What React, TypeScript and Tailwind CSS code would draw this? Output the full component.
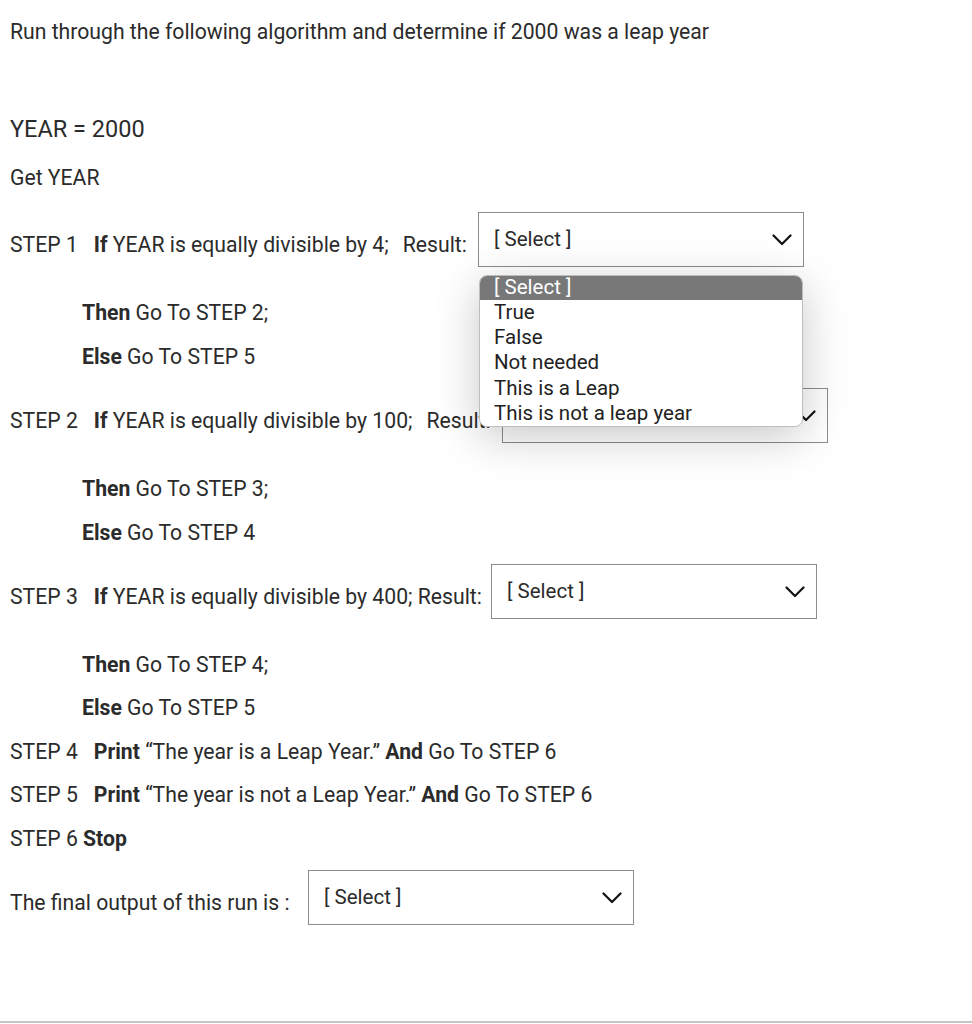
import React from "react";

function Chevron() {
  return (
    <svg width="20" height="12" viewBox="0 0 20 12" className="shrink-0">
      <polyline points="1.5,1.5 10,10 18.5,1.5" fill="none" stroke="#111" strokeWidth="2.2" strokeLinecap="round" strokeLinejoin="round" />
    </svg>
  );
}

function SelectBox() {
  return (
    <div className="w-[326px] h-[55px] border border-[#8c8c8c] bg-white flex items-center justify-between pl-[15px] pr-[11px] shrink-0">
      <span className="text-[20.5px] text-[#2b2b2b] -mt-[1px]">[ Select ]</span>
      <Chevron />
    </div>
  );
}

function StepRow({ labelW, mt, children }: { labelW: number; mt: string; children: React.ReactNode }) {
  return (
    <div className={`flex items-center h-[55px] ${mt}`}>
      <div className="shrink-0 whitespace-nowrap pt-[11px]" style={{ width: labelW }}>
        {children}
      </div>
      <SelectBox />
    </div>
  );
}

export default function App() {
  const options = ["True", "False", "Not needed", "This is a Leap", "This is not a leap year"];
  return (
    <div
      className="relative w-[972px] h-[1024px] bg-white text-[#2b2b2b] text-[21.2px] overflow-hidden"
      style={{ fontFamily: "Roboto, 'Liberation Sans', sans-serif" }}
    >
      <div className="px-[10px]">
        <div className="h-[24px] mt-[20px] flex items-center whitespace-nowrap">
          Run through the following algorithm and determine if 2000 was a leap year
        </div>
        <div className="h-[26px] mt-[73px] flex items-center text-[23.5px]">YEAR = 2000</div>
        <div className="h-[24px] mt-[23px] flex items-center">Get YEAR</div>

        <StepRow labelW={468} mt="mt-[22px]">
          STEP 1<span className="ml-[16px] font-bold">If</span> YEAR is equally divisible by 4;<span className="ml-[14px]">Result:</span>
        </StepRow>
        <div className="h-[24px] mt-[34px] flex items-center pl-[72px]">
          <b className="font-bold">Then</b>&nbsp;Go To STEP 2;
        </div>
        <div className="h-[24px] mt-[20px] flex items-center pl-[72px]">
          <b className="font-bold">Else</b>&nbsp;Go To STEP 5
        </div>

        <StepRow labelW={492} mt="mt-[19px]">
          STEP 2<span className="ml-[16px] font-bold">If</span> YEAR is equally divisible by 100;<span className="ml-[14px]">Result:</span>
        </StepRow>
        <div className="h-[24px] mt-[34px] flex items-center pl-[72px]">
          <b className="font-bold">Then</b>&nbsp;Go To STEP 3;
        </div>
        <div className="h-[24px] mt-[20px] flex items-center pl-[72px]">
          <b className="font-bold">Else</b>&nbsp;Go To STEP 4
        </div>

        <StepRow labelW={481} mt="mt-[19px]">
          STEP 3<span className="ml-[16px] font-bold">If</span> YEAR is equally divisible by 400; Result:
        </StepRow>
        <div className="h-[24px] mt-[34px] flex items-center pl-[72px]">
          <b className="font-bold">Then</b>&nbsp;Go To STEP 4;
        </div>
        <div className="h-[24px] mt-[19px] flex items-center pl-[72px]">
          <b className="font-bold">Else</b>&nbsp;Go To STEP 5
        </div>

        <div className="h-[24px] mt-[20px] flex items-center whitespace-nowrap">
          STEP 4<span className="ml-[16px] font-bold">Print</span>&nbsp;“The year is a Leap Year.”&nbsp;<b className="font-bold">And</b>&nbsp;Go To STEP 6
        </div>
        <div className="h-[24px] mt-[19px] flex items-center whitespace-nowrap">
          STEP 5<span className="ml-[16px] font-bold">Print</span>&nbsp;“The year is not a Leap Year.”&nbsp;<b className="font-bold">And</b>&nbsp;Go To STEP 6
        </div>
        <div className="h-[24px] mt-[20px] flex items-center whitespace-nowrap">
          STEP 6&nbsp;<b className="font-bold">Stop</b>
        </div>

        <StepRow labelW={298} mt="mt-[19px]">
          The final output of this run is :
        </StepRow>
      </div>
      <div className="absolute left-0 right-0 top-[1021px] h-[2px] bg-[#c6c6c6]" />

      <div className="absolute left-[479px] top-[275px] w-[324px] h-[152px] bg-white rounded-[8px] border border-[#bdbdbd] overflow-hidden shadow-[0_10px_45px_rgba(0,0,0,0.22)] text-[20.5px]">
        <div className="h-[24px] bg-[#787878] text-white pl-[14px] leading-[22px]">[ Select ]</div>
        {options.map((o) => (
          <div key={o} className="h-[25.2px] pl-[14px] leading-[25px] text-[#222]">
            {o}
          </div>
        ))}
      </div>
    </div>
  );
}
